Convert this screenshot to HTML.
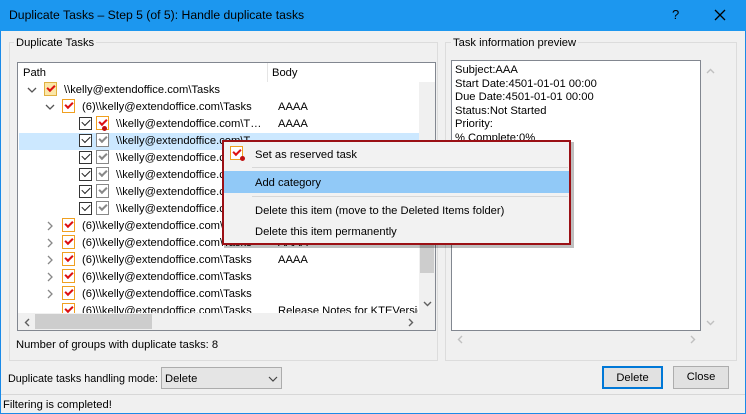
<!DOCTYPE html>
<html><head><meta charset="utf-8"><style>
*{box-sizing:border-box;margin:0;padding:0}
body{width:746px;height:414px;overflow:hidden;background:#f0f0f0;font-family:"Liberation Sans",sans-serif;font-size:11.2px;color:#000;position:relative}
.a{position:absolute;white-space:nowrap;line-height:16px}
.win{position:absolute;left:0;top:0;width:746px;height:414px;border:1px solid #1a8ae8}
.title{position:absolute;left:0;top:0;width:746px;height:31px;background:#1c97ef}
.grp{position:absolute;border:1px solid #dcdcdc}
.gl{position:absolute;background:#f0f0f0;padding:0 2px}
.ico{position:absolute;width:13px;height:14px;border:1.5px solid #f0a020;background:#fff}
.ico:after{content:"";position:absolute;left:2px;top:2px;width:6px;height:3px;border-left:2px solid #d11;border-bottom:2px solid #d11;transform:rotate(-45deg)}
.icog{border-color:#888}.icog:after{border-color:#888}
.cb{position:absolute;width:13px;height:13px;border:1px solid #333;background:#fff}
.cb:after{content:"";position:absolute;left:2px;top:1px;width:7px;height:4px;border-left:1.5px solid #222;border-bottom:1.5px solid #222;transform:rotate(-45deg)}
svg{position:absolute}
.btn{position:absolute;background:#e1e1e1;border:1px solid #adadad;text-align:center;line-height:20px}
</style></head><body>
<div class="win"></div>
<div class="title"></div>
<div class="a" style="left:9px;top:7px;font-size:12.2px">Duplicate Tasks – Step 5 (of 5): Handle duplicate tasks</div>
<div class="a" style="left:672px;top:7px;font-size:13px">?</div>
<svg style="left:714px;top:9px" width="12" height="12"><path d="M1 1L11 11M11 1L1 11" stroke="#000" stroke-width="1.3"/></svg>

<div class="grp" style="left:9px;top:42px;width:429px;height:319px"></div>
<div class="gl a" style="left:14px;top:35px">Duplicate Tasks</div>
<div class="grp" style="left:445px;top:42px;width:292px;height:319px"></div>
<div class="gl a" style="left:451px;top:35px">Task information preview</div>

<div class="a" style="left:17px;top:62px;width:419px;height:269px;background:#fff;border:1px solid #828790"></div>
<div class="a" style="left:23px;top:65px">Path</div>
<div class="a" style="left:267px;top:63px;width:1px;height:19px;background:#e5e5e5"></div>
<div class="a" style="left:272px;top:65px">Body</div>
<div class="a" style="left:19px;top:133px;width:400px;height:17px;background:#cce8ff"></div>

<svg style="left:27px;top:87px" width="10" height="6"><path d="M1 1L5 5L9 1" stroke="#555" fill="none" stroke-width="1.3"/></svg>
<div class="ico" style="left:44px;top:82px;border-color:#e0b040;background:#fbe7a8"></div>
<div class="a" style="left:64px;top:82px">\\kelly@extendoffice.com\Tasks</div>

<svg style="left:45px;top:104px" width="10" height="6"><path d="M1 1L5 5L9 1" stroke="#555" fill="none" stroke-width="1.3"/></svg>
<div class="ico" style="left:62px;top:99px"></div>
<div class="a" style="left:82px;top:99px">(6)\\kelly@extendoffice.com\Tasks</div>
<div class="a" style="left:278px;top:99px">AAAA</div>

<div class="cb" style="left:79px;top:117px"></div><div class="ico" style="left:96px;top:116px"></div>
<div class="a" style="left:102px;top:126px;width:5px;height:5px;border-radius:50%;background:#c01010"></div>
<div class="a" style="left:116px;top:116px">\\kelly@extendoffice.com\T…</div><div class="a" style="left:278px;top:116px">AAAA</div>
<div class="cb" style="left:79px;top:134px"></div><div class="ico icog" style="left:96px;top:133px"></div>
<div class="a" style="left:116px;top:133px">\\kelly@extendoffice.com\T…</div>
<div class="cb" style="left:79px;top:151px"></div><div class="ico icog" style="left:96px;top:150px"></div>
<div class="a" style="left:116px;top:150px">\\kelly@extendoffice.com</div>
<div class="cb" style="left:79px;top:168px"></div><div class="ico icog" style="left:96px;top:167px"></div>
<div class="a" style="left:116px;top:167px">\\kelly@extendoffice.com</div>
<div class="cb" style="left:79px;top:185px"></div><div class="ico icog" style="left:96px;top:184px"></div>
<div class="a" style="left:116px;top:184px">\\kelly@extendoffice.com</div>
<div class="cb" style="left:79px;top:202px"></div><div class="ico icog" style="left:96px;top:201px"></div>
<div class="a" style="left:116px;top:201px">\\kelly@extendoffice.com</div>

<svg style="left:47px;top:221px" width="6" height="10"><path d="M1 1L5 5L1 9" stroke="#888" fill="none" stroke-width="1.3"/></svg><div class="ico" style="left:62px;top:218px"></div><div class="a" style="left:82px;top:218px">(6)\\kelly@extendoffice.com\Tasks</div>
<svg style="left:47px;top:238px" width="6" height="10"><path d="M1 1L5 5L1 9" stroke="#888" fill="none" stroke-width="1.3"/></svg><div class="ico" style="left:62px;top:235px"></div><div class="a" style="left:82px;top:235px">(6)\\kelly@extendoffice.com\Tasks</div><div class="a" style="left:278px;top:235px">AAAA</div>
<svg style="left:47px;top:255px" width="6" height="10"><path d="M1 1L5 5L1 9" stroke="#888" fill="none" stroke-width="1.3"/></svg><div class="ico" style="left:62px;top:252px"></div><div class="a" style="left:82px;top:252px">(6)\\kelly@extendoffice.com\Tasks</div><div class="a" style="left:278px;top:252px">AAAA</div>
<svg style="left:47px;top:272px" width="6" height="10"><path d="M1 1L5 5L1 9" stroke="#888" fill="none" stroke-width="1.3"/></svg><div class="ico" style="left:62px;top:269px"></div><div class="a" style="left:82px;top:269px">(6)\\kelly@extendoffice.com\Tasks</div>
<svg style="left:47px;top:289px" width="6" height="10"><path d="M1 1L5 5L1 9" stroke="#888" fill="none" stroke-width="1.3"/></svg><div class="ico" style="left:62px;top:286px"></div><div class="a" style="left:82px;top:286px">(6)\\kelly@extendoffice.com\Tasks</div>
<div class="a" style="left:18px;top:303px;width:400px;height:10px;overflow:hidden"><div class="ico" style="left:44px;top:0px"></div><div class="a" style="left:64px;top:0px">(6)\\kelly@extendoffice.com\Tasks</div><div class="a" style="left:260px;top:0px">Release Notes for KTEVersion</div></div>

<div class="a" style="left:419px;top:82px;width:16px;height:231px;background:#f0f0f0"></div>
<div class="a" style="left:420px;top:200px;width:14px;height:73px;background:#cdcdcd"></div>
<svg style="left:423px;top:301px" width="9" height="6"><path d="M1 1L4.5 4.5L8 1" stroke="#606060" fill="none" stroke-width="1.4"/></svg>
<div class="a" style="left:18px;top:313px;width:417px;height:17px;background:#f0f0f0"></div>
<div class="a" style="left:35px;top:314px;width:117px;height:15px;background:#cdcdcd"></div>
<svg style="left:24px;top:318px" width="6" height="9"><path d="M5 1L1.5 4.5L5 8" stroke="#606060" fill="none" stroke-width="1.4"/></svg>
<svg style="left:408px;top:318px" width="6" height="9"><path d="M1 1L4.5 4.5L1 8" stroke="#606060" fill="none" stroke-width="1.4"/></svg>

<div class="a" style="left:16px;top:337px">Number of groups with duplicate tasks: 8</div>

<div class="a" style="left:451px;top:60px;width:250px;height:271px;background:#fff;border:1px solid #828790"></div>
<div class="a" style="left:455px;top:64px;line-height:13.6px">Subject:AAA<br>Start Date:4501-01-01 00:00<br>Due Date:4501-01-01 00:00<br>Status:Not Started<br>Priority:<br>% Complete:0%</div>
<svg style="left:706px;top:68px" width="9" height="6"><path d="M1 5L4.5 1.5L8 5" stroke="#c0c0c0" fill="none" stroke-width="1.4"/></svg>
<svg style="left:706px;top:320px" width="9" height="6"><path d="M1 1L4.5 4.5L8 1" stroke="#c0c0c0" fill="none" stroke-width="1.4"/></svg>
<svg style="left:457px;top:335px" width="6" height="9"><path d="M5 1L1.5 4.5L5 8" stroke="#c0c0c0" fill="none" stroke-width="1.4"/></svg>
<svg style="left:690px;top:335px" width="6" height="9"><path d="M1 1L4.5 4.5L1 8" stroke="#c0c0c0" fill="none" stroke-width="1.4"/></svg>

<div class="a" style="left:224px;top:142px;width:350px;height:106px;background:rgba(0,0,0,0.25)"></div>
<div class="a" style="left:222px;top:140px;width:349px;height:105px;background:#f2f2f2;border:2px solid #9b1015"></div>
<div class="ico" style="left:230px;top:146px;border-color:#f0a020"></div>
<div class="a" style="left:240px;top:156px;width:5px;height:5px;border-radius:50%;background:#c01010"></div>
<div class="a" style="left:255px;top:147px">Set as reserved task</div>
<div class="a" style="left:252px;top:167px;width:316px;height:1px;background:#d7d7d7"></div>
<div class="a" style="left:224px;top:171px;width:345px;height:22px;background:#91c9f7"></div>
<div class="a" style="left:255px;top:175px">Add category</div>
<div class="a" style="left:252px;top:196px;width:316px;height:1px;background:#d7d7d7"></div>
<div class="a" style="left:255px;top:203px">Delete this item (move to the Deleted Items folder)</div>
<div class="a" style="left:255px;top:224px">Delete this item permanently</div>

<div class="a" style="left:8px;top:371px;font-size:10.8px">Duplicate tasks handling mode:</div>
<div class="a" style="left:161px;top:367px;width:121px;height:22px;background:#e5e5e5;border:1px solid #acacac"></div>
<div class="a" style="left:165px;top:371px">Delete</div>
<svg style="left:268px;top:376px" width="10" height="6"><path d="M1 1L5 5L9 1" stroke="#444" fill="none" stroke-width="1.2"/></svg>
<div class="btn" style="left:602px;top:366px;width:61px;height:23px;border:2px solid #0078d7">Delete</div>
<div class="btn" style="left:673px;top:366px;width:56px;height:23px">Close</div>
<div class="a" style="left:1px;top:394px;width:744px;height:1px;background:#d7d7d7"></div>
<div class="a" style="left:3px;top:397px">Filtering is completed!</div>
</body></html>
